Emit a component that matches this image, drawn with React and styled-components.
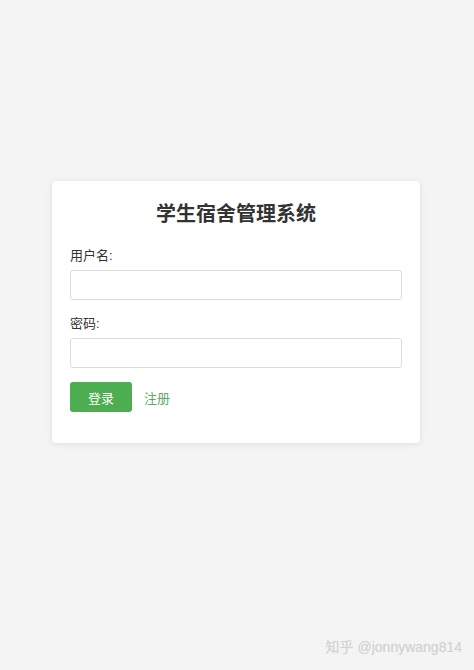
import React from 'react'
import styled, { createGlobalStyle } from 'styled-components'

const GlobalStyle = createGlobalStyle`
  html, body {
    margin: 0;
    padding: 0;
    background: #f4f4f4;
    font-family: "Liberation Sans", "Noto Sans CJK SC", sans-serif;
  }
`

const Page = styled.div`
  position: relative;
  min-height: 670px;
  padding: 181px 0 0 52px;
  box-sizing: border-box;
`

const Card = styled.form`
  width: 368px;
  box-sizing: border-box;
  padding: 20px 18px 31px;
  background: #fff;
  border-radius: 4px;
  box-shadow: 0 1px 6px rgba(0, 0, 0, 0.1);
`

const Title = styled.h2`
  margin: 0 0 20px;
  font-size: 20px;
  line-height: 26px;
  font-weight: bold;
  text-align: center;
  color: #333;
`

const Field = styled.div`
  margin-bottom: ${p => p.gap}px;
`

const Label = styled.label`
  display: block;
  margin-bottom: 5px;
  font-size: 13px;
  line-height: 18px;
  color: #333;
`

const Input = styled.input`
  display: block;
  width: 100%;
  height: 30px;
  box-sizing: border-box;
  border: 1px solid #dcdcdc;
  border-radius: 3px;
  background: #fff;
  padding: 0 8px;
  font-size: 13px;
  outline: none;
`

const Actions = styled.div`
  display: flex;
  align-items: center;
  gap: 12px;
`

const Button = styled.button`
  width: 62px;
  height: 30px;
  border: none;
  border-radius: 3px;
  background: #4cae50;
  color: #fff;
  font-size: 13px;
  font-family: inherit;
  cursor: pointer;
`

const Link = styled.a`
  font-size: 13px;
  color: #62a865;
  text-decoration: none;
`

const Watermark = styled.div`
  position: absolute;
  right: 12px;
  bottom: 14px;
  font-size: 14px;
  color: #d2d2d2;
  text-shadow: 0 0 1px rgba(0, 0, 0, 0.08);
`

export default function App() {
  return (
    <Page>
      <GlobalStyle />
      <Card onSubmit={e => e.preventDefault()}>
        <Title>学生宿舍管理系统</Title>
        <Field gap={15}>
          <Label>用户名:</Label>
          <Input type="text" />
        </Field>
        <Field gap={14}>
          <Label>密码:</Label>
          <Input type="password" />
        </Field>
        <Actions>
          <Button type="submit">登录</Button>
          <Link href="#">注册</Link>
        </Actions>
      </Card>
      <Watermark>知乎 @jonnywang814</Watermark>
    </Page>
  )
}
